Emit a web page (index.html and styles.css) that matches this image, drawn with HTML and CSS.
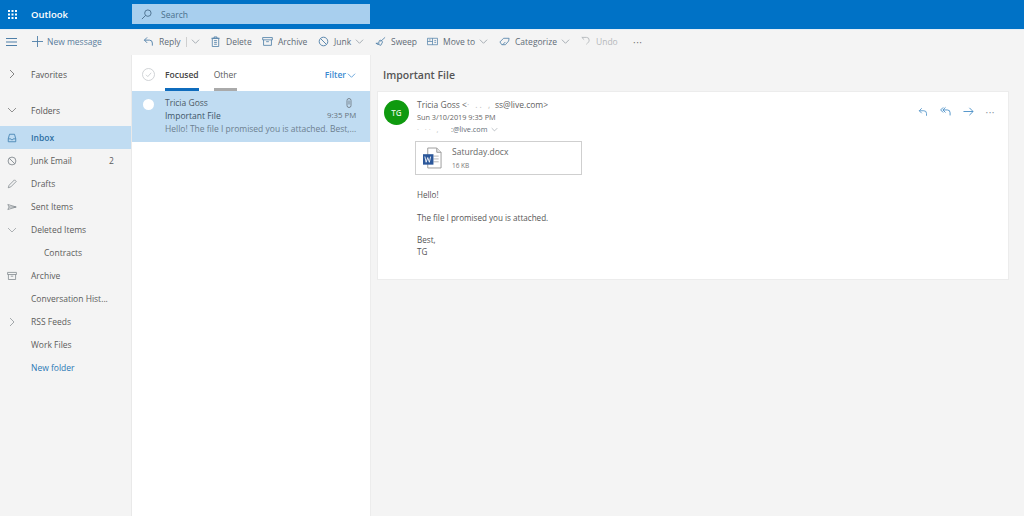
FILE: index.html
```html
<!DOCTYPE html>
<html lang="en">
<head>
<meta charset="utf-8">
<title>Outlook</title>
<link rel="stylesheet" href="styles.css">
</head>
<body>
<svg class="defs" width="0" height="0" aria-hidden="true">
  <symbol id="chev-d" viewBox="0 0 10 10"><path d="M1 3l4 4 4-4" fill="none" stroke="currentColor" stroke-width=".8"/></symbol>
  <symbol id="chev-r" viewBox="0 0 10 10"><path d="M3 1l4 4-4 4" fill="none" stroke="currentColor" stroke-width=".9"/></symbol>
  <symbol id="reply" viewBox="0 0 12 12"><path d="M4.500 1.500L1.500 4.500l3 3M1.500 4.500H7a3.200 3.200 0 0 1 3.200 3.200V10.500" fill="none" stroke="currentColor" stroke-width="1"/></symbol>
  <symbol id="block" viewBox="0 0 12 12"><circle cx="6" cy="6" r="4.700" fill="none" stroke="currentColor"/><path d="M2.700 2.700l6.600 6.600" stroke="currentColor"/></symbol>
  <symbol id="archive" viewBox="0 0 12 12"><path d="M.7 1.700h10.600v2.500H.7zM1.700 4.200v6h8.600v-6M4.500 6.200h3" fill="none" stroke="currentColor" stroke-width=".9"/></symbol>
</svg>

<header class="topbar">
  <div class="brand">
    <svg class="waffle" viewBox="0 0 9 9" width="9" height="9"><path fill="currentColor" d="M0 0h2v2H0zM3.500 0h2v2h-2zM7 0h2v2H7zM0 3.500h2v2H0zM3.500 3.500h2v2h-2zM7 3.500h2v2H7zM0 7h2v2H0zM3.500 7h2v2h-2zM7 7h2v2H7z"/></svg>
    <span class="brand-name">Outlook</span>
  </div>
  <div class="search">
    <svg viewBox="0 0 12 12" width="11" height="11"><circle cx="7.500" cy="4.500" r="3.500" fill="none" stroke="currentColor"/><path d="M5 7L1 11" stroke="currentColor"/></svg>
    <span>Search</span>
  </div>
</header>

<nav class="toolbar">
  <div class="tool-left">
    <svg class="burger" viewBox="0 0 11 8" width="11" height="8"><path d="M0 .5h11M0 4h11M0 7.500h11" stroke="currentColor"/></svg>
    <span class="new-msg">
      <svg viewBox="0 0 11 11" width="11" height="11"><path d="M5.500 0v11M0 5.500h11" stroke="currentColor" stroke-width=".9"/></svg>
      New message
    </span>
  </div>
  <div class="tools">
    <span class="tool t-reply"><svg class="ic"><use href="#reply"/></svg>Reply<i class="sep"></i><svg class="chev"><use href="#chev-d"/></svg></span>
    <span class="tool t-delete"><svg class="ic" viewBox="0 0 12 12"><path d="M2.500 2.500h7v9h-7zM1.500 2.500h9M4.500 2.500V1h3v1.500M4.500 5h3M4.500 7h3M4.500 9h3" fill="none" stroke="currentColor" stroke-width=".9"/></svg>Delete</span>
    <span class="tool t-archive"><svg class="ic"><use href="#archive"/></svg>Archive</span>
    <span class="tool t-junk"><svg class="ic"><use href="#block"/></svg>Junk<svg class="chev"><use href="#chev-d"/></svg></span>
    <span class="tool t-sweep"><svg class="ic" viewBox="0 0 12 12"><path d="M11 1.500L6 6M6.500 4.500l1.800 2-2 3.700L1 8l3-.2.800-2.800zM3 9.500l1.500-1.500" fill="none" stroke="currentColor" stroke-width=".9"/></svg>Sweep</span>
    <span class="tool t-move"><svg class="ic" viewBox="0 0 12 12"><path d="M.5 2.500h11v7H.5zM6 2.500v7M.5 6H6M8 5h2M8 7h2M2 4.300h2" fill="none" stroke="currentColor" stroke-width=".8"/></svg>Move to<svg class="chev"><use href="#chev-d"/></svg></span>
    <span class="tool t-cat"><svg class="ic" viewBox="0 0 12 12"><path d="M1 6.500L5 2.500h6l-.5 3L7 9.500H3zM4 9.500l3-3" fill="none" stroke="currentColor" stroke-width=".9"/></svg>Categorize<svg class="chev"><use href="#chev-d"/></svg></span>
    <span class="tool t-undo muted"><svg class="ic" viewBox="0 0 12 12"><path d="M2 1.500h5a3 3 0 0 1 3 3c0 2-1.500 3-3 4.500M2 1.500l2.500 2.500" fill="none" stroke="currentColor"/></svg>Undo</span>
    <span class="tool dots">···</span>
  </div>
</nav>

<main class="app">
  <aside class="sidebar">
    <div class="group-head fav"><svg class="caret"><use href="#chev-r"/></svg><span>Favorites</span></div>
    <div class="group-head fold"><svg class="caret"><use href="#chev-d"/></svg><span>Folders</span></div>
    <ul class="folders">
      <li class="folder active"><svg class="f-ic" viewBox="0 0 12 12"><path d="M1.500 7l1.500-5.500h6L10.500 7v3.500h-9zM1.500 7h3l.5 1h2l.5-1h3" fill="none" stroke="currentColor"/></svg><span>Inbox</span></li>
      <li class="folder"><svg class="f-ic"><use href="#block"/></svg><span>Junk Email</span><b class="count">2</b></li>
      <li class="folder"><svg class="f-ic" viewBox="0 0 12 12"><path d="M1.500 10.500l1-3L9 1l2 2-6.500 6.500z" fill="none" stroke="currentColor" stroke-width=".9"/></svg><span>Drafts</span></li>
      <li class="folder"><svg class="f-ic" viewBox="0 0 12 12"><path d="M1 3l10 3-10 3 1.500-3zM2.500 6H11" fill="none" stroke="currentColor" stroke-width=".9"/></svg><span>Sent Items</span></li>
      <li class="folder"><svg class="f-ic sm"><use href="#chev-d"/></svg><span>Deleted Items</span></li>
      <li class="folder sub"><span>Contracts</span></li>
      <li class="folder"><svg class="f-ic"><use href="#archive"/></svg><span>Archive</span></li>
      <li class="folder"><i class="f-ic"></i><span>Conversation Hist...</span></li>
      <li class="folder"><svg class="f-ic sm"><use href="#chev-r"/></svg><span>RSS Feeds</span></li>
      <li class="folder"><i class="f-ic"></i><span>Work Files</span></li>
      <li class="folder link"><i class="f-ic"></i><span>New folder</span></li>
    </ul>
  </aside>

  <section class="list">
    <div class="tabs">
      <svg class="check" viewBox="0 0 13 13" width="13" height="13"><circle cx="6.500" cy="6.500" r="6" fill="none" stroke="currentColor" stroke-width=".8"/><path d="M4 6.800l1.800 1.800L9.200 4.800" fill="none" stroke="currentColor" stroke-width=".8"/></svg>
      <span class="tab on">Focused</span>
      <span class="tab off">Other</span>
      <span class="filter">Filter<svg class="chev"><use href="#chev-d"/></svg></span>
    </div>
    <article class="msg">
      <i class="radio"></i>
      <div class="msg-body">
        <div class="msg-row">Tricia Goss<svg class="clip" viewBox="0 0 6 10" width="6" height="10"><path d="M1 2.500a2 2 0 0 1 4 0v5a2 2 0 0 1-4 0z" fill="none" stroke="currentColor"/><path d="M3 2.500v4" stroke="currentColor"/></svg></div>
        <div class="msg-row subject">Important File<span class="time">9:35 PM</span></div>
        <div class="msg-row preview">Hello! The file I promised you is attached. Best,...</div>
      </div>
    </article>
  </section>

  <section class="reading">
    <h1>Important File</h1>
    <div class="card">
      <div class="actions">
        <svg class="a-ic"><use href="#reply"/></svg>
        <svg class="a-ic" viewBox="0 0 12 12"><path d="M3.500 1.500L.7 4.300l2.800 2.800M6 1.500L3.200 4.300 6 7.100M3.200 4.300H8a3 3 0 0 1 3 3v3" fill="none" stroke="currentColor"/></svg>
        <svg class="a-ic" viewBox="0 0 12 12"><path d="M.5 6h10.500M7 2l4 4-4 4" fill="none" stroke="currentColor"/></svg>
        <span class="a-dots">···</span>
      </div>
      <div class="avatar">TG</div>
      <div class="mail">
        <div class="from">Tricia Goss &lt;<span class="smudge w1">· .. ,</span>ss@live.com&gt;</div>
        <div class="date">Sun 3/10/2019 9:35 PM</div>
        <div class="to"><span class="smudge w2">· ·· ,</span>:@live.com<svg class="chev"><use href="#chev-d"/></svg></div>
        <div class="attach">
          <svg class="word" viewBox="0 0 20 22" width="19" height="22">
            <path d="M5 .5h9.500L19 5v16.500H5z" fill="#fff" stroke="#9a9a9a"/>
            <path d="M14.500.5V5H19" fill="#e8e8e8" stroke="#9a9a9a"/>
            <path d="M11 9h5.500M11 12h5.500M11 15h5.500" stroke="#b5b5b5"/>
            <rect x="0" y="7" width="11" height="11" fill="#2b579a"/>
            <path d="M2 9.500l1.300 6 1.700-5 1.700 5 1.300-6" fill="none" stroke="#fff" stroke-width=".9"/>
          </svg>
          <div class="att-text"><div class="att-name">Saturday.docx</div><div class="att-size">16 KB</div></div>
        </div>
        <div class="content">
          <p>Hello!</p>
          <p>The file I promised you is attached.</p>
          <p>Best,<br>TG</p>
        </div>
      </div>
    </div>
  </section>
</main>
</body>
</html>
```
FILE: styles.css
```css
* { box-sizing: border-box; }
html, body { margin: 0; height: 100%; }
body {
  width: 1024px; height: 516px; overflow: hidden;
  display: flex; flex-direction: column;
  font-family: "Open Sans", "Noto Sans", sans-serif;
  font-size: 8.500px; color: #5c5c5c; background: #f4f4f4;
}
.defs { position: absolute; }
ul { margin: 0; padding: 0; list-style: none; }

.topbar { height: 29px; flex: none; background: #0072c6; display: flex; align-items: center; color: #fff; }
.brand { width: 132px; display: flex; align-items: center; padding-left: 8px; }
.brand-name { margin-left: 14px; font-size: 9.500px; font-weight: 600; }
.waffle { display: block; }
.search { width: 238px; height: 20px; margin-top: -1px; background: #a8cfee; color: #4a6f8c; display: flex; align-items: center; gap: 9px; padding-left: 9px; font-size: 8.500px; }

.toolbar { height: 26px; flex: none; display: flex; align-items: center; background: #f4f4f4; color: #5f6b76; border-top: 1px solid #e4eef6; padding-bottom: 2px; }
.tool-left { width: 143px; display: flex; align-items: center; padding-left: 6px; flex: none; }
.burger { color: #4f7fa8; }
.new-msg { display: flex; align-items: center; gap: 4px; margin-left: 15px; font-size: 8.500px; color: #5a7d9c; }
.new-msg svg { color: #4f7fa8; }
.tools { display: flex; align-items: center; }
.tool { display: flex; align-items: center; white-space: nowrap; }
.ic { width: 11px; height: 11px; margin-right: 5px; color: #4f7fa8; flex: none; }
.chev { width: 9px; height: 9px; margin-left: 4px; color: #8a949c; flex: none; }
.sep { width: 1px; height: 10px; background: #cfcfcf; margin-left: 5px; }
.t-reply { width: 67px; }
.t-delete { width: 52px; }
.t-archive { width: 56px; }
.t-junk { width: 57px; }
.t-sweep { width: 52px; }
.t-move { width: 72px; }
.t-cat { width: 81px; }
.t-undo { width: 53px; }
.muted, .muted .ic { color: #b4b8bb; }
.dots { color: #777; font-size: 10px; letter-spacing: .5px; }

.app { flex: 1; display: flex; min-height: 0; }

.sidebar { width: 132px; flex: none; background: #f4f4f4; border-right: 1px solid #e9e9e9; }
.group-head { display: flex; align-items: center; font-weight: 500; color: #555; padding-left: 7px; height: 20px; }
.group-head span { margin-left: 14px; }
.caret { width: 10px; height: 10px; color: #777; flex: none; }
.fav { margin-top: 9px; }
.fold { margin-top: 16px; }
.folders { margin-top: 6px; }
.folder { height: 23px; display: flex; align-items: center; padding-left: 7px; position: relative; }
.folder.sub { padding-left: 44px; }
.f-ic { width: 10px; height: 10px; margin-right: 14px; color: #7b8389; flex: none; display: block; }
.f-ic.sm { color: #9a9fa3; }
.count { position: absolute; left: 109px; font-weight: 400; }
.active { background: #c0dcf2; color: #2d6fa3; font-weight: 600; }
.active .f-ic { color: #3f7fb0; }
.link { color: #2a78b5; }

.list { width: 239px; flex: none; background: #fff; border-right: 1px solid #ececec; }
.tabs { height: 36px; background: #fff; display: flex; align-items: flex-start; padding-left: 10px; position: relative; }
.check { color: #c4c8cb; margin-top: 13px; flex: none; }
.tab { height: 36px; padding-top: 14px; border-bottom: 3px solid transparent; line-height: 12px; }
.tab.on { border-bottom-color: #0f6cbd; color: #444; font-weight: 600; margin-left: 10px; }
.tab.off { border-bottom-color: #aaa; margin-left: 15px; }
.filter { margin-left: auto; margin-right: 14px; margin-top: 14px; line-height: 12px; color: #3b8ad0; font-weight: 600; display: flex; align-items: center; }
.filter .chev { margin-left: 1px; color: #3b8ad0; }
.msg { height: 51px; background: #c0dcf2; display: flex; }
.radio { width: 11px; height: 11px; background: #fff; border-radius: 50%; margin: 8px 0 0 11px; flex: none; }
.msg-body { flex: 1; padding: 5px 15px 0 11px; }
.msg-row { height: 13px; line-height: 13px; display: flex; justify-content: space-between; align-items: center; white-space: nowrap; color: #4d5a65; }
.subject { color: #3d5568; }
.time { font-size: 7.800px; color: #65727c; }
.preview { color: #6d8090; }
.clip { color: #788590; margin-right: 4px; }

.reading { flex: 1; min-width: 0; padding: 0 15px 0 6px; background: #f4f4f4; }
h1 { margin: 0; height: 36px; padding: 13px 0 0 6px; font-size: 10.500px; line-height: 14px; font-weight: 600; color: #555; }
.card { height: 189px; background: #fff; border: 1px solid #ececec; position: relative; display: flex; padding: 9px 0 0 6px; }
.avatar { width: 25px; height: 25px; border-radius: 50%; background: #0f9a0f; color: #d8f0d8; font-size: 8px; font-weight: 600; display: flex; align-items: center; justify-content: center; flex: none; margin-top: -1px; }
.mail { margin-left: 8px; flex: 1; }
.from { line-height: 12px; color: #5f5f5f; margin-top: -2px; }
.date { line-height: 12px; font-size: 7.300px; color: #666; }
.to { line-height: 13px; font-size: 7.300px; display: flex; align-items: center; color: #5f6b76; }
.to .chev { width: 7px; height: 7px; }
.smudge { display: inline-block; color: #bbb; letter-spacing: 2px; overflow: hidden; white-space: nowrap; vertical-align: bottom; }
.w1 { width: 28px; }
.w2 { width: 34px; }
.attach { width: 167px; height: 34px; margin-top: 5px; margin-left: -2px; border: 1px solid #cfcfcf; display: flex; align-items: center; padding-left: 7px; gap: 10px; }
.word { flex: none; }
.att-name { font-size: 8.500px; line-height: 13px; color: #666; }
.att-size { font-size: 6.500px; line-height: 11px; margin-top: 2px; color: #777; }
.content { margin-top: 14px; font-size: 8.100px; color: #555; line-height: 11.500px; }
.content p { margin: 0 0 11px; }
.actions { position: absolute; top: 14px; right: 13px; display: flex; align-items: center; gap: 12px; color: #4a8fc7; }
.a-ic { width: 10px; height: 10px; display: block; }
.actions svg:nth-child(2) { width: 11px; height: 11px; }
.actions svg:nth-child(3) { width: 11px; height: 11px; }
.a-dots { color: #8a949c; font-size: 10px; line-height: 10px; letter-spacing: .5px; }
```
